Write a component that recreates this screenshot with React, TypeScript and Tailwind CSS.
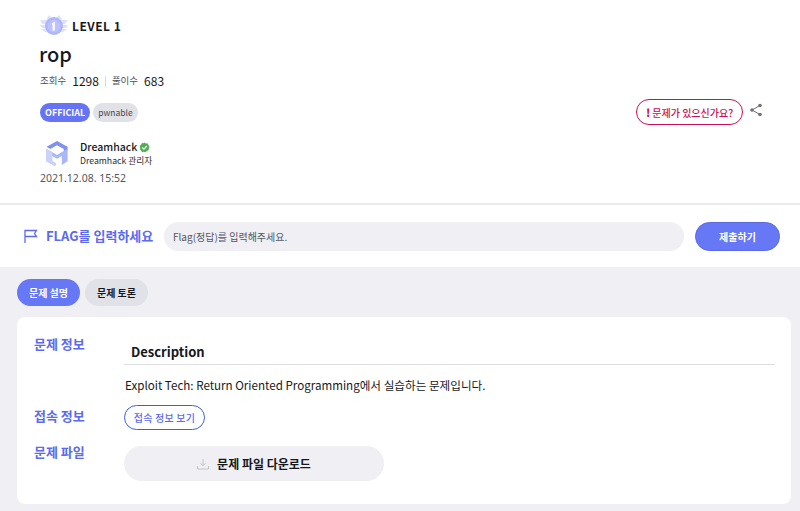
const font = { fontFamily: '"Noto Sans CJK KR","Noto Sans",sans-serif' };

function Medal() {
  return (
    <svg width="28" height="24" viewBox="0 0 28 24" className="block">
      <g fill="#dde0fe">
        <path d="M0 6h7l2 4H2zM0 11h7l1 3H2zM1 15h6l3 3H5z" />
        <path d="M28 6h-7l-2 4h6zM28 11h-7l-1 3h6zM27 15h-6l-3 3h5z" />
        <path d="M6 6l3-5 3 3zM22 6l-3-5-3 3z" />
      </g>
      <circle cx="14" cy="12" r="9" fill="#aeb6fb" />
      <circle cx="14" cy="12" r="6.500" fill="#bcc3fc" />
      <path d="M12 9.200l2.800-1.600V16.500h-2.200V10.800l-.6.300z" fill="#fff" />
    </svg>
  );
}

function Logo() {
  return (
    <svg width="26" height="27" viewBox="0 0 26 28" className="block">
      <path d="M13 1l11 6v3l-4 2.200V9.300L13 5.400 6 9.300 2.200 7z" fill="#7f92ee" />
      <path d="M2 9l11 6.500L24 9v13l-6 4V16.500l-5 3-5-3v5l4 3-1 2.500-9-5z" fill="#a9b6f7" />
      <path d="M2 9l6 3.600V21.500l4 3-1 2.500-9-5z" fill="#c9d2fb" />
    </svg>
  );
}

export default function App() {
  return (
    <div style={font} className="w-[800px] h-[511px] overflow-hidden bg-[#efeff4] text-[#17181c]">
      <header className="h-[205px] bg-white border-b-2 border-[#e9e9ee] pl-10 pr-[37px] pt-[14px] flex flex-col">
        <div className="flex items-center h-6">
          <Medal />
          <span className="ml-[4px] text-[12px] font-bold tracking-[0.5px] leading-none">LEVEL 1</span>
        </div>
        <h1 className="mt-[1px] -ml-px text-[20px] font-medium leading-[30px] h-[30px]">rop</h1>
        <div className="mt-[3px] flex items-center h-[18px] leading-none">
          <span className="text-[9.5px] text-[#4d4f57]">조회수</span>
          <span className="ml-[6px] text-[12px]">1298</span>
          <span className="mx-[6px] w-px h-[11px] bg-[#d9dae0]" />
          <span className="text-[9.5px] text-[#4d4f57]">풀이수</span>
          <span className="ml-[6px] text-[12px]">683</span>
        </div>
        <div className="mt-[9px] h-[26px] flex items-center justify-between">
          <div className="flex gap-[3px]">
            <span className="h-[19px] px-[5px] rounded-full bg-[#6673f5] text-white text-[9px] font-bold leading-[19px]">OFFICIAL</span>
            <span className="h-[19px] px-[5px] rounded-full bg-[#e1e2e8] text-[#45474f] text-[8.500px] leading-[19px]">pwnable</span>
          </div>
          <div className="flex items-center">
            <button className="h-[26px] w-[107px] rounded-full border border-[#cc0f55] text-[#cc0f55] text-[10px] font-medium flex items-center justify-center">
              <span className="font-black text-[11px] mr-[2px]">!</span>문제가 있으신가요?
            </button>
            <svg width="14" height="14" viewBox="0 0 14 14" className="ml-[6px] -mt-[4px]" fill="#6f7078" stroke="#6f7078" strokeWidth="1">
              <path d="M11 2.500L3 7l8 4.500" fill="none" />
              <circle cx="11" cy="2.500" r="1.800" stroke="none" />
              <circle cx="3" cy="7" r="1.800" stroke="none" />
              <circle cx="11" cy="11.500" r="1.800" stroke="none" />
            </svg>
          </div>
        </div>
        <div className="mt-[15px] ml-[4px] flex items-center h-[27px]">
          <Logo />
          <div className="ml-[10px]">
            <div className="flex items-center text-[10.500px] font-medium leading-[14px]">
              Dreamhack
              <svg width="11" height="11" viewBox="0 0 11 11" className="ml-[2px]">
                <path d="M5.500.500l1.500 1 1.800.100.700 1.700 1 1.500-.7 1.700-.3 1.800-1.700.600-1.300 1.300-1.700-.4-1.800.3-1-1.500L1 7.200l.2-1.800L.6 3.700l1.500-1L3 1.100l1.800.100z" fill="#4caf50" />
                <path d="M3.200 5.500l1.700 1.700 3-3.200" fill="none" stroke="#fff" strokeWidth="1.200" />
              </svg>
            </div>
            <div className="text-[8.700px] leading-[13px] text-[#2b2c31]">Dreamhack 관리자</div>
          </div>
        </div>
        <div className="mt-[4px] text-[10.500px] leading-[14px] text-[#55565d]" style={{ fontFamily: '"Noto Sans",sans-serif' }}>2021.12.08. 15:52</div>
      </header>

      <section className="h-[62px] bg-white flex items-center pl-6 pr-5">
        <svg width="14" height="14" viewBox="0 0 14 14" fill="none" stroke="#5b6af0" strokeWidth="1.300" className="shrink-0">
          <path d="M1 14V1.500h11.500l-2 3 2 3H1" />
        </svg>
        <span className="ml-[8px] w-[118px] text-[13px] font-bold text-[#5b6af0] whitespace-nowrap">FLAG를 입력하세요</span>
        <div className="w-[520px] h-[29px] rounded-full bg-[#efeff4] pl-[9px] text-[10px] text-[#55565d] leading-[29px]">Flag(정답)를 입력해주세요.</div>
        <button className="ml-[11px] w-[85px] h-[29px] rounded-full bg-[#6678f6] border border-[#5a69e6] text-white text-[10px] font-bold">제출하기</button>
      </section>

      <div className="px-[17px] pt-3">
        <div className="flex gap-[5px]">
          <button className="w-[63px] h-[27px] rounded-full bg-[#6678f6] text-white text-[10px] font-bold">문제 설명</button>
          <button className="w-[63px] h-[27px] rounded-full bg-[#e1e2e8] text-[#17181c] text-[10px] font-bold">문제 토론</button>
        </div>
        <div className="mt-[11px] w-[774px] h-[187px] bg-white rounded-[8px] pl-[17px] pt-[17px] flex">
          <div className="w-[90px] shrink-0 text-[13px] font-bold text-[#5b6af0] leading-[20px]">
            <div>문제 정보</div>
            <div className="mt-[52px]">접속 정보</div>
            <div className="mt-[16px]">문제 파일</div>
          </div>
          <div className="flex-1 pr-4 min-w-0">
            <div className="h-[31px] border-b border-[#dddde3] pl-[7px] pt-[8px] text-[13px] font-bold leading-[20px]">Description</div>
            <p className="mt-[11px] ml-px text-[11.600px] leading-[18px] text-[#17181c]">Exploit Tech: Return Oriented Programming에서 실습하는 문제입니다.</p>
            <button className="mt-[11px] block w-[81px] h-[25px] rounded-full border border-[#3f5ee0] text-[#5b6af0] text-[10px] font-medium tracking-[0.2px]">접속 정보 보기</button>
            <button className="mt-[16px] w-[260px] h-[35px] rounded-full bg-[#efeff4] flex items-center justify-center text-[12px] font-bold">
              <svg width="12" height="12" viewBox="0 0 12 12" fill="none" stroke="#c3c4ca" className="mr-[8px]">
                <path d="M6 1v6.500M3.500 5.200L6 7.700l2.500-2.500M.5 8v3h11V8" />
              </svg>
              문제 파일 다운로드
            </button>
          </div>
        </div>
      </div>
    </div>
  );
}
